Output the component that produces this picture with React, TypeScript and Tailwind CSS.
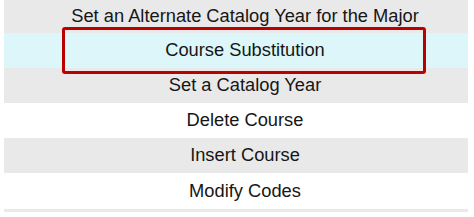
const rows = [
  { label: "Set an Alternate Catalog Year for the Major", bg: "bg-[#e9e9e9]", h: "h-[33px]" },
  { label: "Course Substitution", bg: "bg-[#dcf6fa]", h: "h-[35px]" },
  { label: "Set a Catalog Year", bg: "bg-[#e9e9e9]", h: "h-[35px]" },
  { label: "Delete Course", bg: "bg-white", h: "h-[35px]" },
  { label: "Insert Course", bg: "bg-[#e9e9e9]", h: "h-[35px]" },
  { label: "Modify Codes", bg: "bg-white", h: "h-[36px]" },
];

export default function App() {
  return (
    <div className="h-[217px] w-[474px] bg-white pl-[4px] font-['Liberation_Sans',Arial,sans-serif]">
      <div className="relative w-[464px]">
        {rows.map((row) => (
          <div
            key={row.label}
            className={`flex items-center justify-center pl-[18px] text-[18.3px] leading-none text-[#161616] ${row.bg} ${row.h}`}
          >
            {row.label}
          </div>
        ))}
        <div className="h-[3px] bg-[#e9e9e9]" />
        <div className="absolute left-[58px] top-[27px] h-[47px] w-[364px] rounded-[3px] border-[3px] border-[#bb0000]" />
      </div>
    </div>
  );
}
